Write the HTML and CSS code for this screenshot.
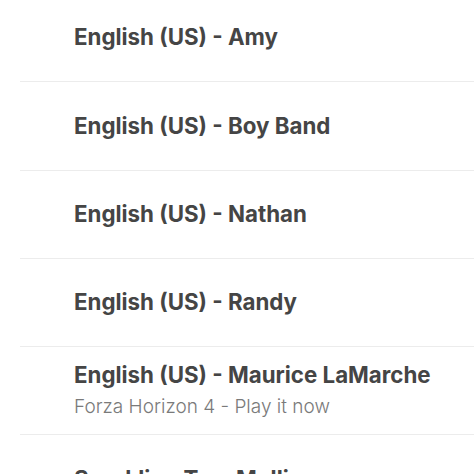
FILE: index.html
```html
<!DOCTYPE html>
<html lang="en">
<head>
    <meta charset="UTF-8">
    <meta name="viewport" content="width=device-width, initial-scale=1.0">
    <title>Voices</title>
    <link rel="stylesheet" href="styles.css">
</head>
<body>
    <!-- Voice list -->
    <ul class="voice-list">
        <li><h3>English (US) - Amy</h3></li>
        <li><h3>English (US) - Boy Band</h3></li>
        <li><h3>English (US) - Nathan</h3></li>
        <li><h3>English (US) - Randy</h3></li>
        <li>
            <h3>English (US) - Maurice LaMarche</h3>
            <p>Forza Horizon 4 - Play it now</p>
        </li>
        <li><h3>Sparkling Tom Mullins</h3></li>
    </ul>
</body>
</html>
```

FILE: styles.css
```css
/* Global Styles */
* {
    box-sizing: border-box;
    margin: 0;
    padding: 0;
}

body {
    font-family: Inter, "Liberation Sans", Arial, sans-serif;
    background-color: #fff;
    color: #444;
    overflow: hidden;
    height: 474px;
}

/* Voice List */
.voice-list {
    list-style-type: none;
    margin-top: -6px;
}

.voice-list li {
    height: 88.25px;
    margin-left: 20px;
    padding-left: 54px;
    border-bottom: 1px solid #ececec;
    display: flex;
    flex-direction: column;
    justify-content: center;
}

.voice-list li h3 {
    font-size: 22.3px;
    font-weight: 700;
    color: #454545;
    line-height: 1.2;
}

.voice-list li p {
    font-size: 19px;
    font-weight: 300;
    color: #7a7a7a;
    margin-top: 7px;
    line-height: 1.2;
}
```
